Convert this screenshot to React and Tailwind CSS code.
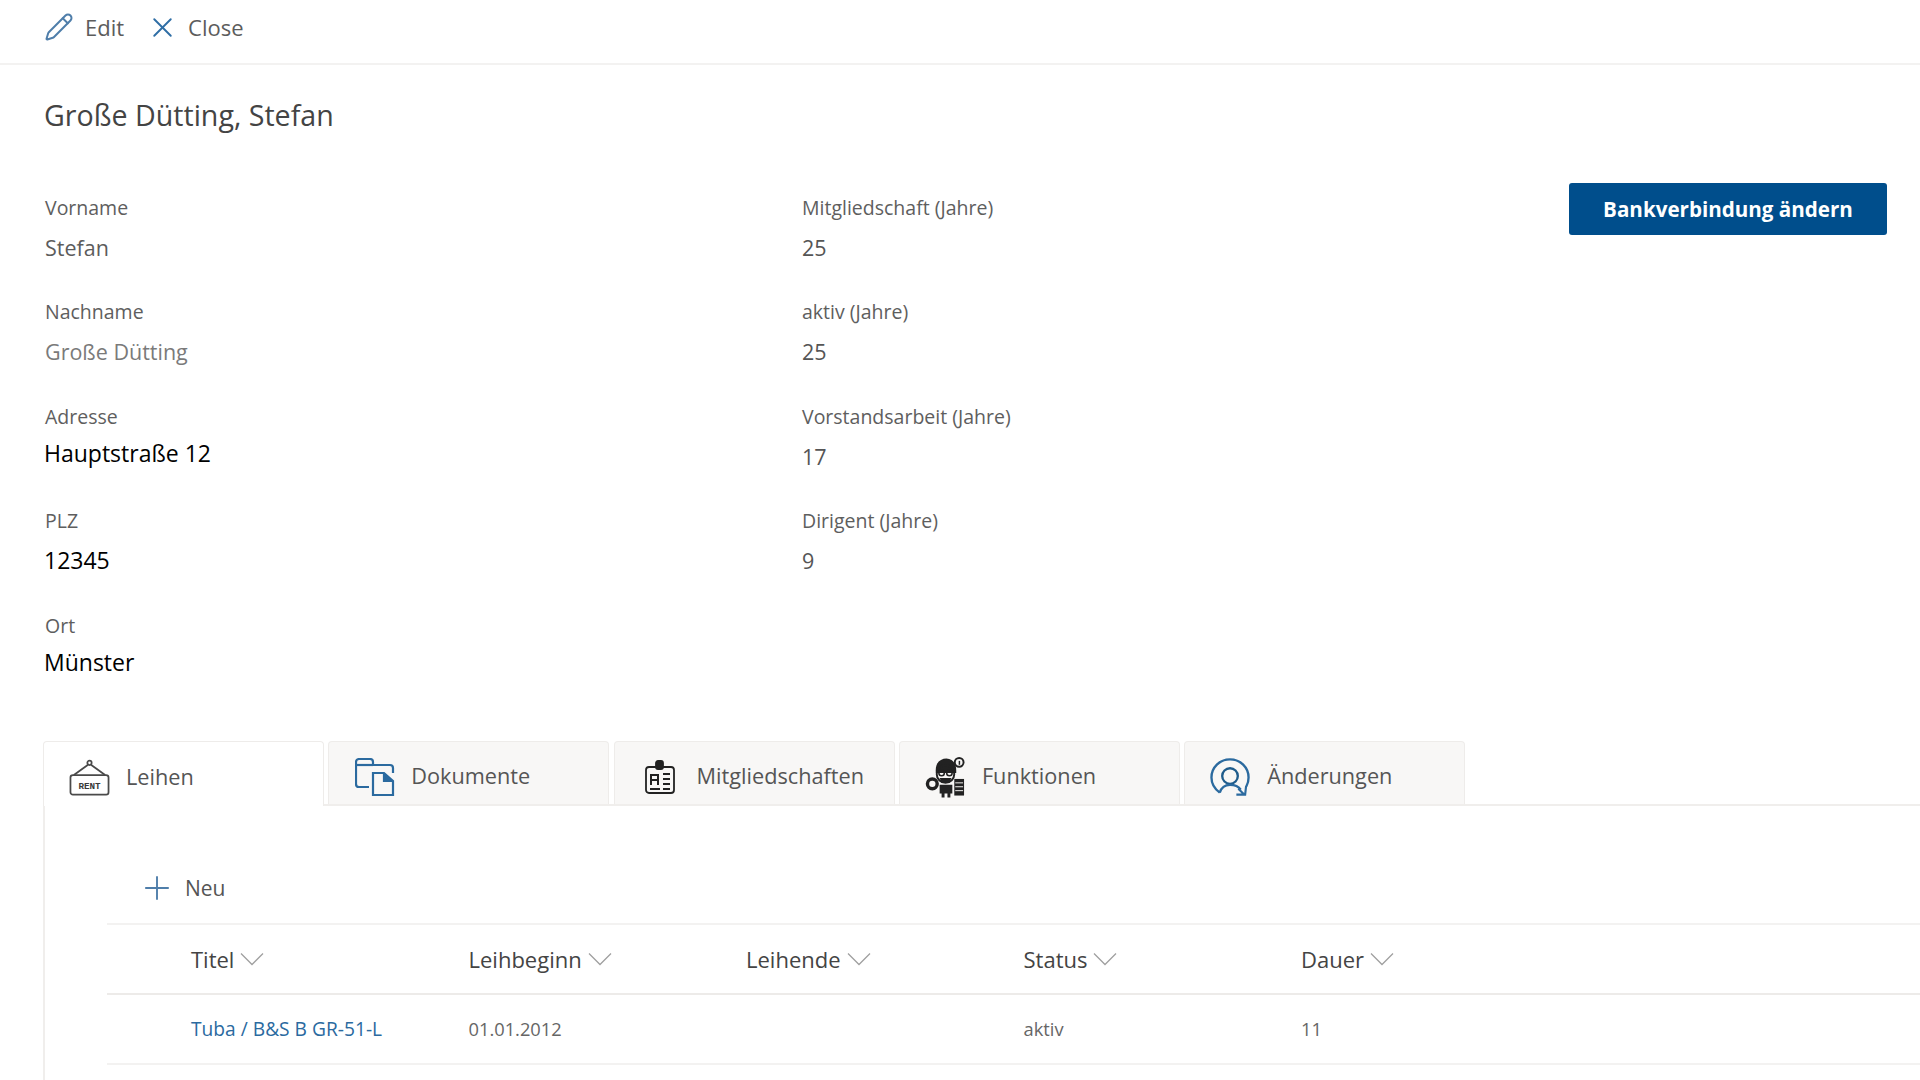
import { Pencil, Plus, X } from "lucide-react";

const font = "font-['Open_Sans',sans-serif]";

const leftFields = [
    { label: "Vorname", value: "Stefan", tone: "text-[#5c5c5c]" },
    { label: "Nachname", value: "Große Dütting", tone: "text-[#7a7a7a]" },
    { label: "Adresse", value: "Hauptstraße 12", dark: "mt-2" },
    { label: "PLZ", value: "12345", dark: "mt-[11px]" },
    { label: "Ort", value: "Münster", dark: "mt-2" },
];

const rightFields = [
    { label: "Mitgliedschaft (Jahre)", value: "25" },
    { label: "aktiv (Jahre)", value: "25" },
    { label: "Vorstandsarbeit (Jahre)", value: "17" },
    { label: "Dirigent (Jahre)", value: "9" },
];

const columns = ["Titel", "Leihbeginn", "Leihende", "Status", "Dauer"];

function RentIcon() {
    return (
        <svg width="42" height="38" viewBox="0 0 42 38" fill="none" stroke="#4a4a4a" strokeWidth="1.8">
            <circle cx="21" cy="3.5" r="2.2" />
            <path d="M19.5 5.5 5 16M22.5 5.5 37 16" />
            <rect x="1.5" y="16" width="39" height="20" rx="2.5" />
            <text x="21" y="30" fontSize="9.5" fontWeight="700" textAnchor="middle" fill="#3a3a3a" stroke="none" fontFamily="'Liberation Mono', monospace">
                RENT
            </text>
        </svg>
    );
}

function DocsIcon() {
    return (
        <svg width="40" height="38" viewBox="0 0 40 38" fill="none" stroke="#2b6a9f" strokeWidth="2.2">
            <path d="M14 29H4a3 3 0 0 1-3-3V4a3 3 0 0 1 3-3h11a3 3 0 0 1 3 3v3h17a3 3 0 0 1 3 3v5" />
            <path d="M1 7h17" />
            <path d="M18 15h11l9 8v14H18z" />
            <path d="M29 15v8h9" fill="#2b6a9f" />
        </svg>
    );
}

function BadgeIcon() {
    return (
        <svg width="30" height="34" viewBox="0 0 30 34" fill="none" stroke="#222" strokeWidth="1.8">
            <rect x="11" y="1" width="7" height="8" rx="2" fill="#222" />
            <rect x="1" y="7" width="28" height="26" rx="3" />
            <path d="M6 25v-10h7v10M6 20h7" strokeWidth="2" />
            <path d="M5 29h10M18 14h7M18 19h7M18 24h7M18 29h7" strokeWidth="2" />
        </svg>
    );
}

function PersonIcon() {
    return (
        <svg width="42" height="42" viewBox="0 0 42 42" fill="#222">
            <circle cx="35" cy="6" r="4.5" fill="none" stroke="#222" strokeWidth="2" />
            <path d="M34.5 4.500h1.500v4h-1.500z" />
            <path d="M11 14c0-8 5-12 11-12s10 5 10 12v3H11z" />
            <circle cx="21" cy="18" r="9" fill="none" stroke="#222" strokeWidth="2" />
            <circle cx="17" cy="17" r="2.800" fill="none" stroke="#222" strokeWidth="1.600" />
            <circle cx="25" cy="17" r="2.800" fill="none" stroke="#222" strokeWidth="1.600" />
            <path d="M15 22h12l-2 5h-8z" />
            <circle cx="7.5" cy="28" r="5" fill="none" stroke="#222" strokeWidth="3.500" />
            <path d="M15 29h13v9h-2v4h-3v-4h-3v4h-3v-4h-2z" />
            <path d="M30 23h10v17H30z" />
            <path d="M31 27h8M31 31h8M31 35h8" stroke="#f8f7f6" strokeWidth="1" />
        </svg>
    );
}

function HistoryIcon() {
    return (
        <svg width="42" height="40" viewBox="0 0 42 40" fill="none" stroke="#2b6a9f" strokeWidth="2.4">
            <path d="M10 36C4.500 32 1.500 27 1.500 20.500 1.500 10 10 2 20.500 2S39.500 10 39.500 20.500c0 3.500-.8 6.500-2.200 9" />
            <circle cx="20.500" cy="19" r="8" stroke="#1f5c8c" />
            <path d="M10 36c1.500-5 5.500-8 10.500-8s9 2 11 5" />
            <path d="M29 32 35 38M37 29 36 38l-9 0" strokeWidth="2.200" />
        </svg>
    );
}

const tabs = [
    { name: "Leihen", icon: <RentIcon />, active: true },
    { name: "Dokumente", icon: <DocsIcon /> },
    { name: "Mitgliedschaften", icon: <BadgeIcon /> },
    { name: "Funktionen", icon: <PersonIcon /> },
    { name: "Änderungen", icon: <HistoryIcon /> },
];

function ColumnChevron() {
    return (
        <svg className="ml-[6px]" width="24" height="14" viewBox="0 0 24 14" fill="none" stroke="#a0a0a0" strokeWidth="1.3">
            <path d="M1 1.500 12 12.500 23 1.500" />
        </svg>
    );
}

function Field({ label, value, tone = "text-[#555]", dark }) {
    return (
        <div className="h-[104.400px]">
            <p className="text-[19.500px] leading-6 font-medium text-[#5e5e5e]">{label}</p>
            {dark ? (
                <p className={`${dark} -ml-px text-[23px] leading-8 text-black`}>{value}</p>
            ) : (
                <p className={`mt-3 text-[21.500px] leading-8 ${tone}`}>{value}</p>
            )}
        </div>
    );
}

function Tab({ name, icon, active }) {
    return (
        <div
            className={`w-[281px] flex items-center pl-[25px] pt-[7px] border border-[#eeecea] rounded-t-[4px] ${
                active ? "h-[65px] -mb-[2px] bg-white border-b-0" : "h-[63px] bg-[#f8f7f6] border-b-0"
            }`}
        >
            <div className="w-[41px] flex justify-center shrink-0">{icon}</div>
            <span className="ml-4 text-[21.700px] text-[#555]">{name}</span>
        </div>
    );
}

export default function App() {
    return (
        <div className={`h-[1080px] overflow-hidden bg-white ${font}`}>
            {/* toolbar */}
            <div className="h-[65px] border-b-2 border-[#f3f2f1] pl-[44px] pb-[9px] flex items-center text-[#5c5c5c] text-[22px]">
                <Pencil className="w-[30px] h-[30px] text-[#4f7eaa]" strokeWidth={1.6} />
                <span className="ml-[11px]">Edit</span>
                <X className="ml-[22px] w-[33px] h-[33px] text-[#2f6ea5]" strokeWidth={1.4} />
                <span className="ml-[9px]">Close</span>
            </div>

            <h1 className="ml-[44px] mt-[30px] text-[28.600px] leading-10 font-medium text-[#444]">
                Große Dütting, Stefan
            </h1>

            {/* form */}
            <div className="mt-[61px] pl-[45px] pr-[33px] flex h-[545px]">
                <div className="w-[757px]">
                    {leftFields.map((f) => (
                        <Field key={f.label} {...f} />
                    ))}
                </div>
                <div className="flex-1">
                    {rightFields.map((f) => (
                        <Field key={f.label} {...f} />
                    ))}
                </div>
                <button className="self-start -mt-[13px] w-[318px] h-[52px] rounded-[3px] bg-[#004e8c] text-white text-[20.600px] font-bold">
                    Bankverbindung ändern
                </button>
            </div>

            {/* tabs */}
            <div className="ml-[43px] flex gap-[4.300px] border-b-2 border-[#f0eeec]">
                {tabs.map((t) => (
                    <Tab key={t.name} {...t} />
                ))}
            </div>

            {/* tab panel */}
            <div className="ml-[43px] pl-[62px] border-l-2 border-[#f0eeec] h-[400px]">
                <div className="h-[119px] pt-[63px] pl-[31px] flex items-start text-[#555] text-[21px] border-b-2 border-[#f3f2f1]">
                    <Plus className="w-[38px] h-[38px] text-[#4f7eaa]" strokeWidth={1.2} />
                    <span className="ml-[9px] leading-[38px]">Neu</span>
                </div>
                <div className="h-[70px] pl-[84px] flex items-center border-b-2 border-[#edebe9]">
                    {columns.map((c) => (
                        <div key={c} className="w-[277.500px] flex items-center text-[22px] font-medium text-[#444]">
                            {c}
                            <ColumnChevron />
                        </div>
                    ))}
                </div>
                <div className="h-[70px] pl-[84px] flex items-center border-b-2 border-[#f3f2f1] text-[18.300px] text-[#666]">
                    <span className="w-[277.500px] text-[19.200px] text-[#2b6a9f]">Tuba / B&amp;S B GR-51-L</span>
                    <span className="w-[277.500px]">01.01.2012</span>
                    <span className="w-[277.500px]" />
                    <span className="w-[277.500px]">aktiv</span>
                    <span className="w-[277.500px]">11</span>
                </div>
            </div>
        </div>
    );
}
